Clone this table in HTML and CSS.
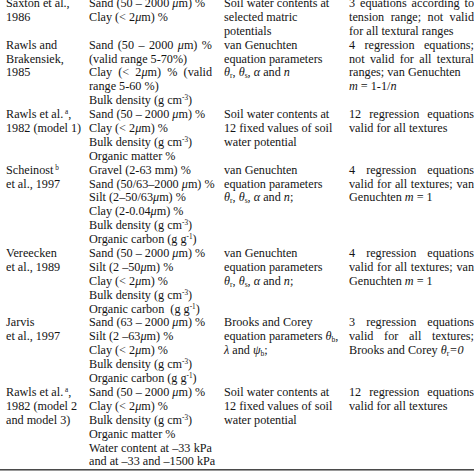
FILE: index.html
```html
<!DOCTYPE html>
<html>
<head>
<meta charset="utf-8">
<link rel="stylesheet" href="styles.css">
</head>
<body>
<div class="table">
  <!-- Saxton -->
  <div class="c1"><div class="ln">Saxton et al.,</div><div class="ln">1986</div></div>
  <div class="c2"><div class="ln">Sand (50 – 2000 <i>μ</i>m) %</div><div class="ln">Clay (&lt; 2<i>μ</i>m) %</div></div>
  <div class="c3"><div class="ln">Soil water contents at</div><div class="ln">selected matric</div><div class="ln">potentials</div></div>
  <div class="c4"><div class="ln j">3 equations according to</div><div class="ln j">tension range; not valid</div><div class="ln">for all textural ranges</div></div>

  <!-- Rawls and Brakensiek -->
  <div class="c1"><div class="ln">Rawls and</div><div class="ln">Brakensiek,</div><div class="ln">1985</div></div>
  <div class="c2"><div class="ln j">Sand (50 – 2000 <i>μ</i>m) %</div><div class="ln">(valid range 5-70%)</div><div class="ln j">Clay (&lt; 2<i>μ</i>m) % (valid</div><div class="ln">range 5-60 %)</div><div class="ln">Bulk density (g cm<sup>-3</sup>)</div></div>
  <div class="c3"><div class="ln">van Genuchten</div><div class="ln">equation parameters</div><div class="ln"><i>θ</i><sub>r</sub>, <i>θ</i><sub>s</sub>, <i>α</i> and <i>n</i></div></div>
  <div class="c4"><div class="ln j">4 regression equations;</div><div class="ln j">not valid for all textural</div><div class="ln">ranges; van Genuchten</div><div class="ln"><i>m</i> = 1-1/<i>n</i></div></div>

  <!-- Rawls 1982 model 1 -->
  <div class="c1"><div class="ln">Rawls et al.<sup> a</sup>,</div><div class="ln">1982 (model 1)</div></div>
  <div class="c2"><div class="ln">Sand (50 – 2000 <i>μ</i>m) %</div><div class="ln">Clay (&lt; 2<i>μ</i>m) %</div><div class="ln">Bulk density (g cm<sup>-3</sup>)</div><div class="ln">Organic matter %</div></div>
  <div class="c3"><div class="ln">Soil water contents at</div><div class="ln">12 fixed values of soil</div><div class="ln">water potential</div></div>
  <div class="c4"><div class="ln j">12 regression equations</div><div class="ln">valid for all textures</div></div>

  <!-- Scheinost -->
  <div class="c1"><div class="ln">Scheinost<sup> b</sup></div><div class="ln">et al., 1997</div></div>
  <div class="c2"><div class="ln">Gravel (2-63 mm) %</div><div class="ln">Sand (50/63–2000 <i>μ</i>m) %</div><div class="ln">Silt (2–50/63<i>μ</i>m) %</div><div class="ln">Clay (2-0.04<i>μ</i>m) %</div><div class="ln">Bulk density (g cm<sup>-3</sup>)</div><div class="ln">Organic carbon (g g<sup>-1</sup>)</div></div>
  <div class="c3"><div class="ln">van Genuchten</div><div class="ln">equation parameters</div><div class="ln"><i>θ</i><sub>r</sub>, <i>θ</i><sub>s</sub>, <i>α</i> and <i>n</i>;</div></div>
  <div class="c4"><div class="ln j">4 regression equations</div><div class="ln j">valid for all textures; van</div><div class="ln">Genuchten <i>m</i> = 1</div></div>

  <!-- Vereecken -->
  <div class="c1"><div class="ln">Vereecken</div><div class="ln">et al., 1989</div></div>
  <div class="c2"><div class="ln">Sand (50 – 2000 <i>μ</i>m) %</div><div class="ln">Silt (2 –50<i>μ</i>m) %</div><div class="ln">Clay (&lt; 2<i>μ</i>m) %</div><div class="ln">Bulk density (g cm<sup>-3</sup>)</div><div class="ln pre">Organic carbon  (g g<sup>-1</sup>)</div></div>
  <div class="c3"><div class="ln">van Genuchten</div><div class="ln">equation parameters</div><div class="ln"><i>θ</i><sub>r</sub>, <i>θ</i><sub>s</sub>, <i>α</i> and <i>n</i>;</div></div>
  <div class="c4"><div class="ln j">4 regression equations</div><div class="ln j">valid for all textures; van</div><div class="ln">Genuchten <i>m</i> = 1</div></div>

  <!-- Jarvis -->
  <div class="c1"><div class="ln">Jarvis</div><div class="ln">et al., 1997</div></div>
  <div class="c2"><div class="ln">Sand (63 – 2000 <i>μ</i>m) %</div><div class="ln">Silt (2 –63<i>μ</i>m) %</div><div class="ln">Clay (&lt; 2<i>μ</i>m) %</div><div class="ln">Bulk density (g cm<sup>-3</sup>)</div><div class="ln">Organic carbon (g g<sup>-1</sup>)</div></div>
  <div class="c3"><div class="ln">Brooks and Corey</div><div class="ln">equation parameters <i>θ</i><sub>b</sub>,</div><div class="ln"><i>λ</i> and <i>ψ</i><sub>b</sub>;</div></div>
  <div class="c4"><div class="ln j">3 regression equations</div><div class="ln j">valid for all textures;</div><div class="ln">Brooks and Corey <i>θ</i><sub>r</sub><i>=0</i></div></div>

  <!-- Rawls 1982 model 2/3 -->
  <div class="c1"><div class="ln">Rawls et al.<sup> a</sup>,</div><div class="ln">1982 (model 2</div><div class="ln">and model 3)</div></div>
  <div class="c2"><div class="ln">Sand (50 – 2000 <i>μ</i>m) %</div><div class="ln">Clay (&lt; 2<i>μ</i>m) %</div><div class="ln">Bulk density (g cm<sup>-3</sup>)</div><div class="ln">Organic matter %</div><div class="ln j">Water content at –33 kPa</div><div class="ln">and at –33 and –1500 kPa</div></div>
  <div class="c3"><div class="ln">Soil water contents at</div><div class="ln">12 fixed values of soil</div><div class="ln">water potential</div></div>
  <div class="c4"><div class="ln j">12 regression equations</div><div class="ln">valid for all textures</div></div>
</div>
</body>
</html>
```
FILE: styles.css
```css
html, body {
  margin: 0;
  padding: 0;
  background: #ffffff;
  overflow: hidden;
}
body {
  width: 474px;
  height: 474px;
}
.table {
  margin-top: -3px;
  padding-left: 6px;
  display: grid;
  grid-template-columns: 83px 135px 125px 125px;
  font-family: "Liberation Serif", "Times New Roman", serif;
  font-size: 12.2px;
  line-height: 13.9px;
  color: #141414;
  border-bottom: 1px solid #4a4a4a;
  box-shadow: 0 1px 0 #9a9a9a;
  width: 474px;
  box-sizing: border-box;
}
.c2 {
  padding-right: 12px;
}
.ln {
  white-space: nowrap;
  height: 13.9px;
}
.ln.j {
  text-align: justify;
  text-align-last: justify;
}
.ln.pre {
  white-space: pre;
}
i {
  font-style: italic;
}
sup {
  font-size: 7.2px;
  line-height: 0;
  vertical-align: 4px;
}
sub {
  font-size: 7.6px;
  line-height: 0;
  vertical-align: -2px;
}
```
